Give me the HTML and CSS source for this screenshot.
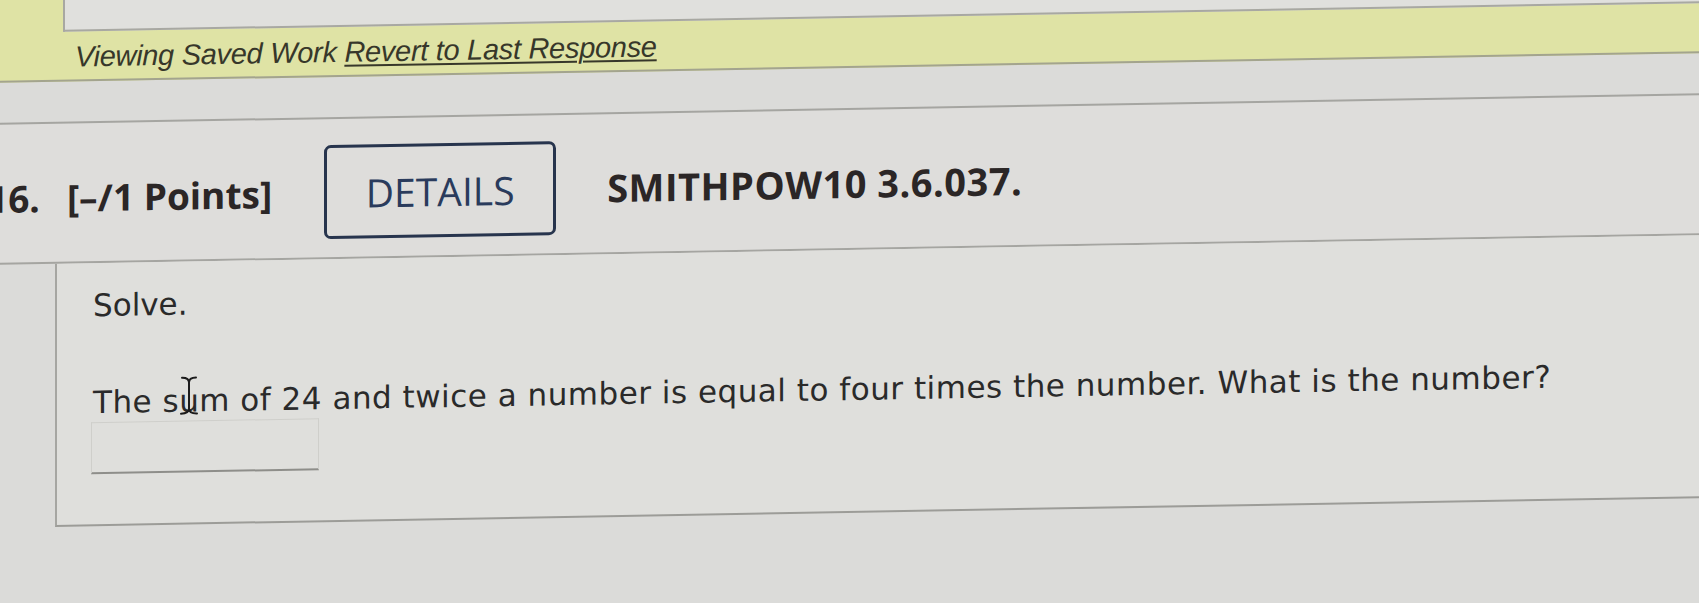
FILE: index.html
```html
<!DOCTYPE html>
<html lang="en">
<head>
<meta charset="utf-8">
<title>SMITHPOW10 3.6.037.</title>
<link rel="stylesheet" href="styles.css">
</head>
<body>
<div class="page">
  <section class="saved-bar">
    <div class="prev-question"></div>
    <p class="saved-text">Viewing Saved Work <a href="#" class="revert">Revert to Last Response</a></p>
  </section>
  <div class="spacer"></div>
  <header class="q-header">
    <span class="q-num">16.</span>
    <span class="q-points">[–/1 Points]</span>
    <button class="details-btn" type="button">DETAILS</button>
    <span class="q-code">SMITHPOW10 3.6.037.</span>
  </header>
  <div class="q-wrap">
    <div class="q-body">
      <p class="q-intro">Solve.</p>
      <p class="q-text">The sum of 24 and twice a number is equal to four times the number. What is the number?<svg class="ibeam" width="20" height="40" viewBox="0 0 20 40" aria-hidden="true"><path d="M3 2 Q10 2 10 7 Q10 2 17 2 M10 7 V33 M2 38 Q10 38 10 33 Q10 38 18 38" fill="none" stroke="#1c1c1c" stroke-width="2" stroke-linecap="round"/></svg></p>
      <input class="answer" type="text" aria-label="answer">
    </div>
  </div>
</div>
</body>
</html>
```
FILE: styles.css
```css
html, body {
  margin: 0;
  padding: 0;
  overflow: hidden;
}

body {
  background: #dbdbd9;
  width: 1699px;
  height: 603px;
}

.page {
  margin-top: -20px;
  transform: skewY(-1deg);
  transform-origin: 850px 0;
}

/* saved work banner */
.saved-bar {
  background: #dfe3a5;
  border-bottom: 2px solid #a3a48e;
}

.prev-question {
  margin-left: 63px;
  height: 36px;
  background: #e0e0dd;
  border-left: 2px solid #a8a8a2;
  border-bottom: 2px solid #a8a8a2;
}

.saved-text {
  margin: 9px 0 0;
  padding: 0 0 7px 75px;
  font: italic 29px/32px "Liberation Sans", Arial, sans-serif;
  letter-spacing: -0.3px;
  color: #37372a;
}

.revert {
  color: inherit;
  text-decoration: underline;
  text-decoration-thickness: 2px;
  text-underline-offset: 3px;
}

.spacer {
  height: 40px;
}

/* question header */
.q-header {
  display: flex;
  align-items: center;
  height: 130px;
  padding-top: 8px;
  background: #dedddb;
  border-top: 2px solid #a5a5a1;
  border-bottom: 2px solid #a5a5a1;
  font-family: "Open Sans", "Liberation Sans", sans-serif;
  color: #2b2626;
  white-space: nowrap;
}

.q-num,
.q-points,
.q-code {
  font-size: 37px;
  font-weight: 700;
}

.q-num {
  margin-left: -13px;
}

.q-points {
  margin-left: 27px;
}

.details-btn {
  margin-left: 52px;
  box-sizing: border-box;
  width: 232px;
  height: 94px;
  padding: 0;
  background: transparent;
  border: 3px solid #27344d;
  border-radius: 7px;
  font-family: "Open Sans", "Liberation Sans", sans-serif;
  font-size: 39px;
  font-weight: 400;
  color: #2a3b5c;
}

.q-code {
  margin-left: 51px;
  font-size: 38px;
  letter-spacing: 0.5px;
}

/* question body */
.q-wrap {
  padding-left: 55px;
}

.q-body {
  padding: 24px 0 50px 36px;
  background: #dfdfdc;
  border-left: 2px solid #a6a6a2;
  border-bottom: 2px solid #9c9c98;
  font-family: "DejaVu Sans", Verdana, sans-serif;
  font-size: 31px;
  line-height: 36px;
  color: #2a2a2a;
}

.q-intro {
  margin: 0;
}

.q-text {
  position: relative;
  margin: 61px 0 0;
  white-space: nowrap;
  letter-spacing: 0.5px;
}

.ibeam {
  position: absolute;
  left: 86px;
  top: -7px;
}

.answer {
  display: block;
  box-sizing: border-box;
  margin: 2px 0 0 -2px;
  width: 228px;
  height: 52px;
  background: transparent;
  border: 1px solid #cfcfcb;
  border-bottom: 2px solid #8e8e8a;
  outline: none;
}
```
